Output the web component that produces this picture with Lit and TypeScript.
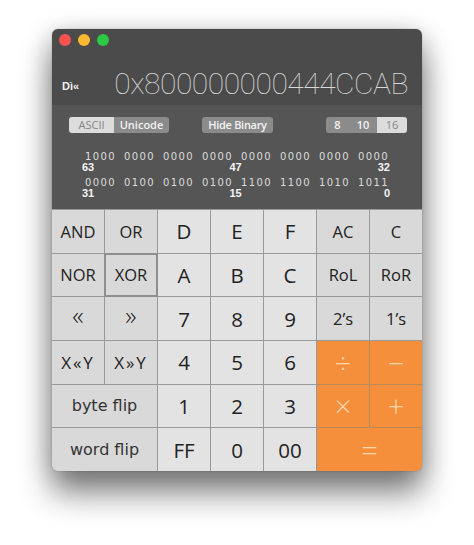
import { LitElement, html, css } from "lit";
import { customElement } from "lit/decorators.js";

type Key = { t: string; k?: string };
const keys: Key[] = [
  { t: "AND", k: "fn" }, { t: "OR", k: "fn" }, { t: "D" }, { t: "E" }, { t: "F" }, { t: "AC", k: "fn" }, { t: "C", k: "fn" },
  { t: "NOR", k: "fn" }, { t: "XOR", k: "fn sel" }, { t: "A" }, { t: "B" }, { t: "C" }, { t: "RoL", k: "fn" }, { t: "RoR", k: "fn" },
  { t: "«", k: "fn arrow" }, { t: "»", k: "fn arrow" }, { t: "7" }, { t: "8" }, { t: "9" }, { t: "2’s", k: "fn" }, { t: "1’s", k: "fn" },
  { t: "X«Y", k: "fn xy" }, { t: "X»Y", k: "fn xy" }, { t: "4" }, { t: "5" }, { t: "6" }, { t: "÷", k: "op" }, { t: "−", k: "op" },
  { t: "byte flip", k: "fn wide" }, { t: "1" }, { t: "2" }, { t: "3" }, { t: "×", k: "op" }, { t: "+", k: "op" },
  { t: "word flip", k: "fn wide" }, { t: "FF" }, { t: "0" }, { t: "00" }, { t: "=", k: "op span2" },
];

const bits = [
  { n: "1000 0000 0000 0000 0000 0000 0000 0000", l: ["63", "47", "32"] },
  { n: "0000 0100 0100 0100 1100 1100 1010 1011", l: ["31", "15", "0"] },
];

@customElement("app-root")
export class AppRoot extends LitElement {
  static styles = css`
    :host { display: block; width: 474px; height: 545px; background: #fff; overflow: hidden; }
    .page { padding: 29px 52px 0; }
    .win {
      width: 370px; height: 442px; border-radius: 6px; overflow: hidden;
      display: flex; flex-direction: column;
      box-shadow: 0 0 1px rgba(0,0,0,.55), 0 22px 32px rgba(0,0,0,.48), 0 4px 26px rgba(0,0,0,.22);
      font-family: "Open Sans", sans-serif;
    }
    .head { height: 76px; background: #4b4b4b; display: flex; flex-direction: column; box-sizing: border-box; padding: 5px 14px 0 7px; }
    .lights { display: flex; gap: 7px; }
    .light { width: 12px; height: 12px; border-radius: 50%; }
    .red { background: #fb5050; } .yellow { background: #fdb82f; } .green { background: #2cc942; }
    .disp { display: flex; justify-content: space-between; align-items: center; margin-top: 20px; padding-left: 3px; }
    .mode { font: bold 11px "Liberation Sans", sans-serif; color: #eee; margin-top: 3px; }
    .value { font: 100 30px/36px "Roboto", sans-serif; color: #d8d8d8; white-space: nowrap; letter-spacing: -0.5px; }
    .ctrl { height: 104px; background: #555; display: flex; flex-direction: column; box-sizing: border-box; padding: 12px 15px 0 17px; }
    .seg-row { display: flex; }
    .hide { margin-left: 33px; margin-right: 53px; }
    .seg { display: flex; height: 16px; border-radius: 3px; overflow: hidden; font: 600 11px/16px "Open Sans", sans-serif; }
    .seg span { background: #8b8b8b; color: #f2f2f2; text-align: center; white-space: nowrap; }
    .seg span.on { background: #dcdcdc; color: #858585; font-weight: 400; }
    .a { width: 45px; } .u { width: 55px; } .h { width: 71px; letter-spacing: -0.3px; } .b8 { width: 23px; } .b10 { width: 28px; } .b16 { width: 30px; }
    .bin { margin-top: 18px; display: flex; flex-direction: column; gap: 4px; }
    .bits { display: flex; gap: 8px; padding-left: 16px; font: 10px/11px "DejaVu Sans", sans-serif; color: #dcdcdc; }
    .bits span { width: 31px; letter-spacing: 1.4px; white-space: nowrap; }
    .labels { display: flex; justify-content: space-between; padding: 0 17px 0 13px; font: bold 11px/11px "Liberation Sans", sans-serif; color: #f4f4f4; }
    .labels span { width: 13px; }
    .labels span:last-child { text-align: right; }
    .grid {
      height: 262px; box-sizing: border-box; padding-top: 1px; background: #999;
      display: grid; grid-template-columns: repeat(7, 52px); grid-template-rows: repeat(6, 1fr); gap: 1px;
    }
    .key { background: #e3e3e3; color: #222; display: flex; align-items: center; justify-content: center; font-size: 20.5px; min-height: 0; box-sizing: border-box; white-space: nowrap; }
    .fn { background: #d9d9d9; font-size: 16.5px; }
    .sel { box-shadow: inset 0 0 0 1px #8f8f8f; outline: 1px solid #8f8f8f; z-index: 1; }
    .arrow { font-size: 26px; font-weight: 300; padding-bottom: 8px; }
    .xy { font-size: 17px; font-weight: 400; letter-spacing: 2px; }
    .wide { grid-column: span 2; font: 16px "DejaVu Sans", sans-serif; color: #333; }
    .op { background: #f68f3c; color: #fbd7ae; font: 300 29px "Open Sans", sans-serif; box-shadow: 1px 0 0 #b98a58, 0 1px 0 #b98a58; }
    .span2 { grid-column: span 2; box-shadow: none; }
  `;

  render() {
    return html`<div class="page"><div class="win">
      <div class="head">
        <div class="lights"><i class="light red"></i><i class="light yellow"></i><i class="light green"></i></div>
        <div class="disp"><span class="mode">Dì«</span><span class="value">0x800000000444CCAB</span></div>
      </div>
      <div class="ctrl">
        <div class="seg-row">
          <div class="seg"><span class="a on">ASCII</span><span class="u">Unicode</span></div>
          <div class="seg hide"><span class="h">Hide Binary</span></div>
          <div class="seg"><span class="b8">8</span><span class="b10">10</span><span class="b16 on">16</span></div>
        </div>
        <div class="bin">
          ${bits.map((r) => html`<div>
            <div class="bits">${r.n.split(" ").map((g) => html`<span>${g}</span>`)}</div>
            <div class="labels">${r.l.map((x) => html`<span>${x}</span>`)}</div>
          </div>`)}
        </div>
      </div>
      <div class="grid">
        ${keys.map((k) => html`<div class="key ${k.k ?? ""}">${k.t}</div>`)}
      </div>
    </div></div>`;
  }
}
